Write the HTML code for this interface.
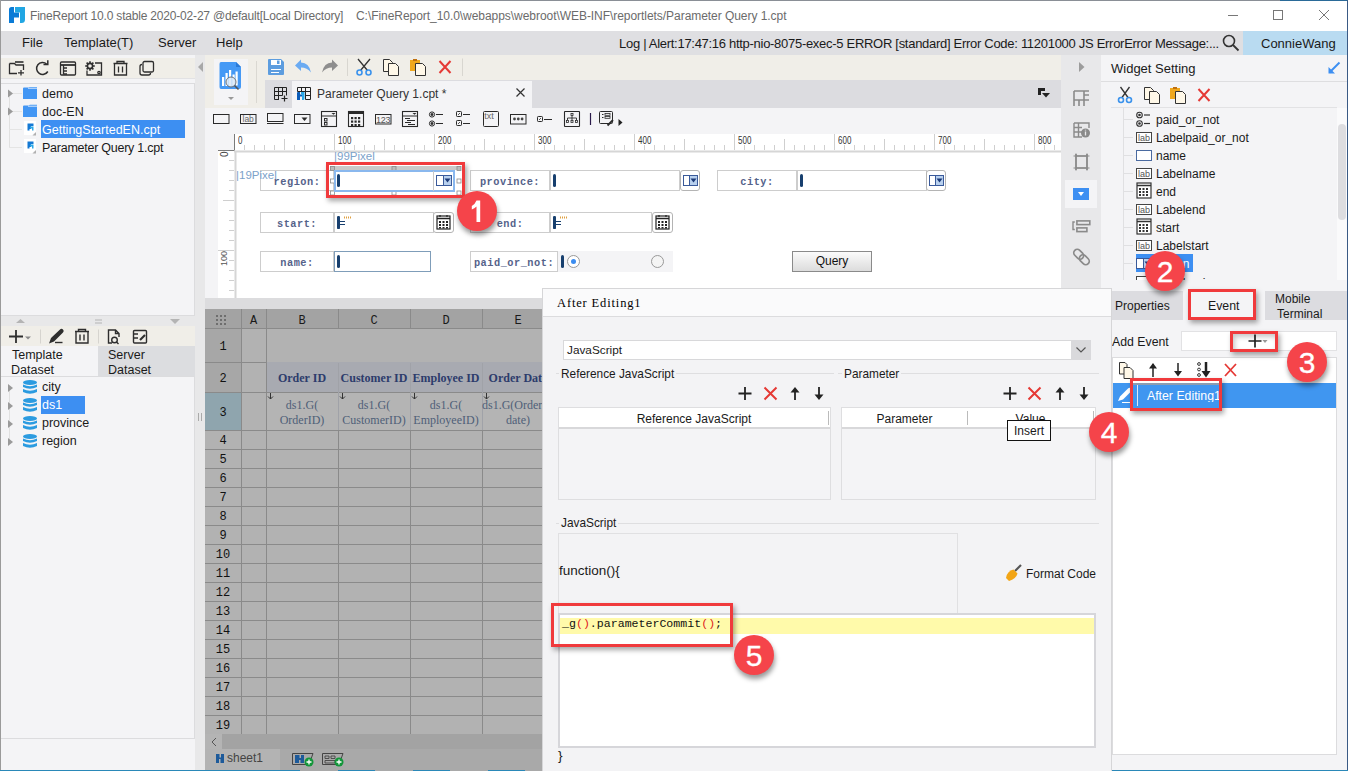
<!DOCTYPE html>
<html><head><meta charset="utf-8">
<style>
*{margin:0;padding:0;box-sizing:border-box}
html,body{width:1348px;height:771px;overflow:hidden;background:#f4f4f6;font-family:"Liberation Sans",sans-serif;color:#1a1a1a}
.a{position:absolute}
.t{position:absolute;white-space:nowrap;line-height:1}
</style></head><body>
<div class="a" style="left:0;top:0;width:1348px;height:771px;overflow:hidden">

<!-- window border -->
<div class="a" style="left:0;top:0;width:1280px;height:1px;background:#8a8f96"></div><div class="a" style="left:1280px;top:0;width:68px;height:1px;background:#2a6a98"></div>
<div class="a" style="left:0;top:0;width:1px;height:771px;background:#9a9a9a"></div>
<div class="a" style="left:1347px;top:0;width:1px;height:771px;background:#3a5a85"></div><div class="a" style="left:1346px;top:55px;width:1px;height:715px;background:#e4e4e6"></div>
<div class="a" style="left:0;top:770px;width:1348px;height:1px;background:#2a88b8"></div><div class="a" style="left:300px;top:770px;width:242px;height:1px;background:repeating-linear-gradient(90deg,#a9a9a9 0 38px,#2a88b8 38px 75px)"></div>

<!-- title bar -->
<div class="a" style="left:1px;top:1px;width:1346px;height:30px;background:#fff"></div>

<!-- menu bar -->
<div class="a" style="left:1px;top:31px;width:1346px;height:24px;background:#dfdfe2"></div>
<div class="a" style="left:1243px;top:31px;width:104px;height:24px;background:#b9dbf1"></div>


<!-- TITLE -->
<svg class="a" style="left:9px;top:7px" width="16" height="16" viewBox="0 0 16 16"><path d="M0,2.5Q0,0 2.5,0H5V5.4H10V10.4H5V16H0Z" fill="#0a7bd6"/><path d="M6,0H16V12.5Q16,16 12.5,16H11V5.4H6Z" fill="#21a6e3"/></svg>
<div class="t" style="left:30px;top:10px;font-size:12px;color:#6b6b6b;letter-spacing:-0.19px">FineReport 10.0 stable 2020-02-27 @default[Local Directory]</div>
<div class="t" style="left:356px;top:10px;font-size:12px;color:#6b6b6b;letter-spacing:-0.05px">C:\FineReport_10.0\webapps\webroot\WEB-INF\reportlets/Parameter Query 1.cpt</div>
<div class="a" style="left:1228px;top:15px;width:10px;height:1px;background:#777"></div>
<div class="a" style="left:1273px;top:10px;width:10px;height:10px;border:1px solid #777"></div>
<svg class="a" style="left:1319px;top:10px" width="10" height="10" viewBox="0 0 10 10"><path d="M0,0L10,10M10,0L0,10" stroke="#777" stroke-width="1"/></svg>

<!-- MENU -->
<div class="t" style="left:22px;top:36px;font-size:13px">File</div>
<div class="t" style="left:64px;top:36px;font-size:13px">Template(T)</div>
<div class="t" style="left:158px;top:36px;font-size:13px">Server</div>
<div class="t" style="left:216px;top:36px;font-size:13px">Help</div>
<div class="t" style="left:619px;top:37px;font-size:13px;letter-spacing:-0.29px">Log | Alert:17:47:16 http-nio-8075-exec-5 ERROR [standard] Error Code: 11201000 JS ErrorError Message:...</div>
<svg class="a" style="left:1222px;top:34px" width="18" height="18" viewBox="0 0 18 18"><circle cx="7" cy="7" r="5.5" fill="none" stroke="#333" stroke-width="1.6"/><path d="M11,11L16.5,16.5" stroke="#333" stroke-width="1.8"/></svg>
<div class="t" style="left:1261px;top:37px;font-size:13px">ConnieWang</div>

<!-- left panel -->
<div class="a" style="left:1px;top:55px;width:194px;height:715px;background:#f4f4f6"></div>
<div class="a" style="left:1px;top:58px;width:194px;height:20px;background:#f0eee8"></div>
<div class="a" style="left:1px;top:78px;width:194px;height:1px;background:#e2e2e4"></div>
<svg class="a" style="left:8px;top:60px" width="150" height="17" viewBox="0 0 150 17" fill="none" stroke="#2e2e2e" stroke-width="1.3">
 <path d="M1.5,3.5H6.5L8,5H15.5V10M9,13.5H1.5V3.5"/><path d="M7,2H15.5" stroke-width="1.6"/><path d="M13,10V15.5M10,12.8H16"/>
 <path d="M38.6,4A6,6 0 1 0 39.8,11.5" stroke-width="1.5"/><path d="M35.5,4.5H39.8V0.2" stroke-width="1.5"/>
 <rect x="52.5" y="2" width="15" height="13" rx="1"/><path d="M52.5,5H67.5" stroke-width="1.8"/><path d="M55.5,5V14.5M55.5,8H59M55.5,11H59M55.5,14H59"/>
 <circle cx="82" cy="6" r="2.6" stroke-width="1.6"/><path d="M82,1.2V3M82,9V10.8M77.2,6H79M85,6H86.8M78.6,2.6L79.9,3.9M84.1,8.1L85.4,9.4M85.4,2.6L84.1,3.9M79.9,8.1L78.6,9.4" stroke-width="1.6"/><path d="M87,3H93.5V15H79V10.5"/><circle cx="91" cy="12.5" r="1.2"/>
 <path d="M105.5,3.5H119.5M109,3.5V1.5H116V3.5M106.5,3.5V15H118.5V3.5M110.5,6.5V12.5M114.5,6.5V12.5"/>
 <rect x="135" y="1.5" width="10.5" height="10.5" rx="1.5"/><path d="M134,4.5A2,2 0 0 0 132,6.5V13A2,2 0 0 0 134,15H140.5A2,2 0 0 0 142.5,13"/>
</svg>
<!-- tree box -->
<div class="a" style="left:1px;top:83px;width:194px;height:233px;border:1px solid #dcdcde;border-left:none;background:#f4f4f6"></div>
<div class="a" style="left:9px;top:96px;width:1px;height:52px;background:#e0e0e0"></div>
<div class="a" style="left:12px;top:93px;width:10px;height:1px;background:#e4e4e4"></div>
<div class="a" style="left:12px;top:111px;width:10px;height:1px;background:#e4e4e4"></div>
<div class="a" style="left:9px;top:129px;width:13px;height:1px;background:#e4e4e4"></div>
<div class="a" style="left:9px;top:147px;width:13px;height:1px;background:#e4e4e4"></div>
<svg class="a" style="left:7px;top:87px" width="32" height="70" viewBox="0 0 32 70">
 <path d="M1,2.5L6,6.5L1,10.5Z" fill="#9a9a9a"/><path d="M1,20.5L6,24.5L1,28.5Z" fill="#9a9a9a"/>
 <path d="M16,1.5Q16,0.5 17,0.5H21.5L23,-0.2H30V12H16Z" fill="#4296f4"/><path d="M21,1.2H30" stroke="#fff" stroke-width="0.8"/>
 <path d="M16,19.5Q16,18.5 17,18.5H21.5L23,17.8H30V30H16Z" fill="#4296f4"/><path d="M21,19.2H30" stroke="#fff" stroke-width="0.8"/>
 <path d="M17,34H29V46H27L25,48H17Z" fill="#fff"/><path d="M29,45L25.5,48.5H29Z" fill="#b0b0b0"/>
 <path d="M20.5,36.5H26.5V39H24V42H22.5V43.5H20.5Z" fill="#1479d4"/><path d="M23,39.5H26.5V43.5H25V41.5H23Z" fill="#2aa8e8"/>
 <path d="M17,52H29V64H27L25,66H17Z" fill="#fff"/><path d="M29,63L25.5,66.5H29Z" fill="#b0b0b0"/>
 <path d="M20.5,54.5H26.5V57H24V60H22.5V61.5H20.5Z" fill="#1479d4"/><path d="M23,57.5H26.5V61.5H25V59.5H23Z" fill="#2aa8e8"/>
</svg>
<div class="t" style="left:42px;top:88px;font-size:12.5px">demo</div>
<div class="t" style="left:42px;top:106px;font-size:12.5px">doc-EN</div>
<div class="a" style="left:41px;top:120px;width:144px;height:18px;background:#3d8ff2"></div>
<div class="t" style="left:42px;top:124px;font-size:12.5px;color:#fff">GettingStartedEN.cpt</div>
<div class="t" style="left:42px;top:142px;font-size:12.5px;letter-spacing:-0.25px">Parameter Query 1.cpt</div>

<!-- datasets splitter -->
<div class="a" style="left:1px;top:316px;width:194px;height:10px;background:#e8e8e9"></div>
<svg class="a" style="left:15px;top:318px" width="170" height="8" viewBox="0 0 170 8"><path d="M1,5L5.5,1L10,5Z" fill="#b4b4b4"/><path d="M80,2H87M80,5H87" stroke="#b4b4b4" stroke-width="1"/><path d="M155,1H165L160,6Z" fill="#b4b4b4"/></svg>
<div class="a" style="left:1px;top:326px;width:194px;height:20px;background:#f0eee8"></div>
<svg class="a" style="left:8px;top:328px" width="145" height="17" viewBox="0 0 145 17" fill="none" stroke="#2e2e2e" stroke-width="1.4">
 <path d="M8,2V15M1,8.5H15" stroke-width="1.8"/><path d="M17,8.5H23L20,11.5Z" fill="#8a8a8a" stroke="none"/>
 <path d="M32.5,1.5V15.5" stroke="#d6d4cf" stroke-width="1"/>
 <path d="M41,15.5L43,10L52,1.5A1.5,1.5 0 0 1 55,4.5L46,13.5Z" fill="#2e2e2e" stroke="none"/><path d="M47,14.5H54.5"/>
 <path d="M67,3.5H81M70.5,3.5V1.5H77.5V3.5M68,3.5V15H80V3.5M72,6.5V12.5M76,6.5V12.5"/>
 <path d="M90.5,1.5V15.5" stroke="#d6d4cf" stroke-width="1"/>
 <path d="M104,15H100.5V2H107.5L111,5.5V9M107.5,2V5.5H111"/><circle cx="106.5" cy="12" r="2.8"/><path d="M108.5,14L110.5,16"/>
 <rect x="125.5" y="2.5" width="13" height="12.5" rx="1"/><path d="M125.5,6H130M125.5,10H130" /><path d="M132,12L137,7" stroke-width="2.2"/>
</svg>
<!-- dataset tabs -->
<div class="a" style="left:98px;top:346px;width:97px;height:31px;background:#dcdde0"></div>
<div class="t" style="left:12px;top:349px;font-size:12.5px">Template</div>
<div class="t" style="left:11px;top:364px;font-size:12.5px">Dataset</div>
<div class="t" style="left:108px;top:349px;font-size:12.5px">Server</div>
<div class="t" style="left:108px;top:364px;font-size:12.5px">Dataset</div>
<div class="a" style="left:1px;top:376px;width:194px;height:363px;border:1px solid #dcdcde;border-left:none;background:#f4f4f6"></div>
<div class="a" style="left:9px;top:390px;width:1px;height:52px;background:#e0e0e0"></div>
<svg class="a" style="left:7px;top:379px" width="32" height="72" viewBox="0 0 32 72">
 <g fill="#9a9a9a"><path d="M1,5L6,9L1,13Z"/><path d="M1,23L6,27L1,31Z"/><path d="M1,41L6,45L1,49Z"/><path d="M1,59L6,63L1,67Z"/></g>
 <g fill="#2b9be0">
 <ellipse cx="23" cy="3.5" rx="7" ry="2.5"/><path d="M16,5.5Q23,9 30,5.5V8Q23,11.5 16,8Z"/><path d="M16,10Q23,13.5 30,10V13Q23,16.5 16,13Z"/>
 <ellipse cx="23" cy="21.5" rx="7" ry="2.5"/><path d="M16,23.5Q23,27 30,23.5V26Q23,29.5 16,26Z"/><path d="M16,28Q23,31.5 30,28V31Q23,34.5 16,31Z"/>
 <ellipse cx="23" cy="39.5" rx="7" ry="2.5"/><path d="M16,41.5Q23,45 30,41.5V44Q23,47.5 16,44Z"/><path d="M16,46Q23,49.5 30,46V49Q23,52.5 16,49Z"/>
 <ellipse cx="23" cy="57.5" rx="7" ry="2.5"/><path d="M16,59.5Q23,63 30,59.5V62Q23,65.5 16,62Z"/><path d="M16,64Q23,67.5 30,64V67Q23,70.5 16,67Z"/>
 </g>
</svg>
<div class="t" style="left:42px;top:381px;font-size:12.5px">city</div>
<div class="a" style="left:41px;top:396px;width:44px;height:18px;background:#3d8ff2"></div>
<div class="t" style="left:42px;top:399px;font-size:12.5px;color:#fff">ds1</div>
<div class="t" style="left:42px;top:417px;font-size:12.5px">province</div>
<div class="t" style="left:42px;top:435px;font-size:12.5px">region</div>

<!-- splitter -->
<div class="a" style="left:195px;top:55px;width:10px;height:715px;background:#e8e8e9"></div>

<!-- center -->
<div class="a" style="left:205px;top:55px;width:856px;height:25px;background:#f0eee8"></div>
<div class="a" style="left:205px;top:80px;width:856px;height:28px;background:#dcdce0"></div>
<div class="a" style="left:205px;top:80px;width:60px;height:28px;background:#f0eee8"></div>
<div class="a" style="left:214px;top:59px;width:34px;height:46px;background:#f4f4f6"></div>
<svg class="a" style="left:219px;top:61px" width="24" height="40" viewBox="0 0 24 40">
 <path d="M2,1H17L22,6V26Q22,28 20,28H2Q0.5,28 0.5,26V3Q0.5,1 2,1Z" fill="#4599f5"/><path d="M17,1L22,6H17Z" fill="#2a7ad8"/>
 <g fill="#fff"><rect x="3" y="16" width="2.2" height="9"/><rect x="6.5" y="12" width="2.2" height="13"/><rect x="10" y="9" width="2.2" height="16"/><rect x="13.5" y="13.5" width="2.2" height="11"/><rect x="16.5" y="10.5" width="2.2" height="14"/></g>
 <circle cx="12" cy="21" r="5" fill="#dbe9f8" fill-opacity="0.85" stroke="#666" stroke-width="0.9"/><path d="M15.5,24.5L19.5,28.5" stroke="#555" stroke-width="1.6"/>
 <path d="M9,36H15L12,39Z" fill="#999"/>
</svg>
<div class="a" style="left:256px;top:61px;width:1px;height:42px;background:#dad8d2"></div>
<svg class="a" style="left:0;top:0" width="470" height="80" viewBox="0 0 470 80">
 <path d="M268,60Q268,59 269,59H281L284,62V74Q284,75 283,75H269Q268,75 268,74Z" fill="#5d9ddf"/><rect x="271" y="60" width="10" height="5" fill="#fff"/><rect x="277" y="60.5" width="2.5" height="3.5" fill="#5d9ddf"/><path d="M271,69.5H281M271,72.5H279" stroke="#fff" stroke-width="1"/>
 <path d="M295,65.5L301,59.5V62.5Q309,62.5 311,72.5Q307,67.5 301,67.5V71Z" fill="#6babf2"/>
 <path d="M338,65.5L332,59.5V62.5Q324,62.5 322,72.5Q326,67.5 332,67.5V71Z" fill="#8e8e8e"/>
 <path d="M347.5,58.5V76" stroke="#d8d6d0" stroke-width="1"/>
 <path d="M358,59L367.5,70.5M370,59L360.5,70.5" stroke="#333" stroke-width="1.3"/><circle cx="359.5" cy="72.5" r="2.5" fill="none" stroke="#3a92ec" stroke-width="1.6"/><circle cx="368.5" cy="72.5" r="2.5" fill="none" stroke="#3a92ec" stroke-width="1.6"/>
 <path d="M383.5,59.5H389.5L392.5,62.5V71.5H383.5Z" fill="#fff8e8" stroke="#333" stroke-width="1"/><path d="M388.5,63.5H395.5L398.5,66.5V75.5H388.5Z" fill="#fff8e8" stroke="#333" stroke-width="1"/>
 <rect x="410" y="60" width="10" height="11" fill="#f0a81c"/><rect x="413" y="59" width="4" height="2" fill="#c07010"/><path d="M415.5,63.5H422.5L425.5,66.5V75.5H415.5Z" fill="#fff8e8" stroke="#333" stroke-width="1"/>
 <path d="M439.5,61L450.5,73M450.5,61L439.5,73" stroke="#e53935" stroke-width="2"/>
 <path d="M462.5,58.5V76" stroke="#d8d6d0" stroke-width="1"/>
</svg>
<!-- tabs -->
<svg class="a" style="left:0;top:0" width="320" height="110" viewBox="0 0 320 110" fill="none" stroke="#222" stroke-width="1"><path d="M274.5,99.5V87.5H286.5V95.5M278.5,87.5V99.5M282.5,87.5V95.5M274.5,91.5H286.5M274.5,95.5H282.5M274.5,99.5H279"/><path d="M284.5,95.5V101.5M281.5,98.5H287.5" stroke-width="1.2"/></svg>
<div class="a" style="left:292px;top:81px;width:240px;height:27px;background:#f4f4f6"></div>
<svg class="a" style="left:0;top:0" width="320" height="110" viewBox="0 0 320 110"><path d="M297.5,91.5V87.5H310.5V99.5H305.5V87.5M297.5,91.5H310.5M305.5,95.5H310.5M301.5,87.5V91.5" fill="none" stroke="#222" stroke-width="1"/><path d="M297,93Q297,92 298,92H300V94.5H302V96.5H300V100H297Z" fill="#0b5cb8"/><path d="M301,92H304.5V98.5Q304.5,100 303,100H302V94.5H301Z" fill="#2aa8e8"/></svg>
<div class="t" style="left:317px;top:88px;font-size:12px;color:#333">Parameter Query 1.cpt *</div>
<svg class="a" style="left:516px;top:88px" width="9" height="9" viewBox="0 0 9 9"><path d="M0.5,0.5L8.5,8.5M8.5,0.5L0.5,8.5" stroke="#333" stroke-width="1.2"/></svg>
<svg class="a" style="left:1038px;top:88px" width="12" height="11" viewBox="0 0 12 11"><path d="M0,0H7V3H3V7H0Z" fill="#222"/><path d="M4,5H12L8,9.5Z" fill="#222"/></svg>
<!-- widget toolbar -->
<div class="a" style="left:205px;top:108px;width:856px;height:26px;background:#f4f4f6"></div>
<svg class="a" style="left:205px;top:108px" width="420" height="26" viewBox="0 0 420 26" fill="none" stroke="#2a2a2a" stroke-width="1">
 <rect x="8.5" y="6.5" width="15.5" height="9"/>
 <rect x="35.5" y="6.5" width="15.5" height="9"/><text x="37.5" y="14.2" font-size="8.5" fill="#666" stroke="none" font-family="Liberation Sans">lab</text>
 <rect x="62.5" y="5.5" width="15.5" height="8"/><path d="M62,15.5H78.5" />
 <rect x="89.5" y="6.5" width="15.5" height="9"/><path d="M96.5,9.5H102.5L99.5,13Z" fill="#2a2a2a" stroke="none"/>
 <rect x="116.5" y="3.5" width="15" height="15" stroke-width="1.1"/><path d="M116.5,8H131.5"/><path d="M126.5,5H130.5L128.5,6.8Z" fill="#2a2a2a" stroke="none"/><rect x="119.5" y="10.5" width="2.5" height="2.5"/><rect x="119.5" y="14.5" width="2.5" height="2.5"/>
 <rect x="143.5" y="3.5" width="15" height="15" stroke-width="1.1"/><path d="M143.5,5H158.5" stroke-width="2"/><g fill="#2a2a2a" stroke="none"><rect x="146.0" y="9.0" width="2.2" height="2.2"/><rect x="146.0" y="12.5" width="2.2" height="2.2"/><rect x="146.0" y="16.0" width="2.2" height="2.2"/><rect x="149.5" y="9.0" width="2.2" height="2.2"/><rect x="149.5" y="12.5" width="2.2" height="2.2"/><rect x="149.5" y="16.0" width="2.2" height="2.2"/><rect x="153.0" y="9.0" width="2.2" height="2.2"/><rect x="153.0" y="12.5" width="2.2" height="2.2"/><rect x="153.0" y="16.0" width="2.2" height="2.2"/></g>
 <rect x="170.5" y="6.5" width="15.5" height="9.5"/><text x="171" y="14.8" font-size="9" fill="#555" stroke="none" font-family="Liberation Sans" letter-spacing="-0.2">123</text>
 <rect x="197.5" y="3.5" width="15" height="15" stroke-width="1.1"/><path d="M197.5,8H212.5M200,10.5H205M202,12.5H210M200,14.5H206M203,16.5H210"/><path d="M207.5,5H211.5L209.5,6.8Z" fill="#2a2a2a" stroke="none"/>
 <circle cx="227" cy="6.5" r="2.6"/><circle cx="227" cy="6.5" r="1" fill="#2a2a2a"/><path d="M231,6.5H238"/><circle cx="227" cy="15.5" r="2.6"/><circle cx="227" cy="15.5" r="1" fill="#2a2a2a"/><path d="M231,15.5H238"/>
 <rect x="251.5" y="3.5" width="5" height="5" rx="0.8"/><path d="M253,7L255,5" stroke-width="0.8"/><path d="M258,6.5H265"/><rect x="251.5" y="12.5" width="5" height="5" rx="0.8"/><path d="M253,16L255,14" stroke-width="0.8"/><path d="M258,15.5H265"/>
 <rect x="278.5" y="3.5" width="15" height="15" rx="1"/><text x="279.3" y="11" font-size="9" fill="#666" stroke="none" font-family="Liberation Sans">txt</text>
 <rect x="305.5" y="6.5" width="15.5" height="9.5"/><g fill="#444" stroke="none"><circle cx="309.5" cy="11" r="1.4"/><circle cx="313.3" cy="11" r="1.4"/><circle cx="317.1" cy="11" r="1.4"/></g>
 <rect x="332.5" y="8.5" width="5" height="5" rx="0.8"/><path d="M334,12L336,10" stroke-width="0.8"/><path d="M339,11.5H347"/>
 <rect x="359.5" y="3.5" width="15" height="15" rx="0.5" stroke-width="1.1"/><rect x="366" y="5.5" width="2" height="2" stroke-width="0.8"/><path d="M367,7.5V10M362.5,12V10H371.5V12M367,10V12" stroke-width="0.9"/><rect x="361.5" y="12.5" width="2" height="2" stroke-width="0.8"/><rect x="366" y="12.5" width="2" height="2" stroke-width="0.8"/><rect x="370.5" y="12.5" width="2" height="2" stroke-width="0.8"/>
 <path d="M385.5,5V17" stroke="#2a1a4a" stroke-width="1.2"/>
 <rect x="394.5" y="3.5" width="13" height="12" rx="1"/><path d="M397,6.5H398.5M397,9.5H398.5" stroke-width="1.2"/><rect x="400" y="5.5" width="5" height="1.8" stroke-width="0.8"/><rect x="400" y="8.5" width="5" height="1.8" stroke-width="0.8"/><path d="M402.5,17.5L408,12" stroke-width="1.8"/>
 <path d="M413.5,11L417.5,14.5L413.5,18Z" fill="#222" stroke="none"/>
</svg>
<!-- ruler -->
<div class="a" style="left:205px;top:134px;width:856px;height:164px;background:#f4f4f6"></div>
<div class="a" style="left:234px;top:134px;width:827px;height:164px;background:#fff"></div><div class="a" style="left:218px;top:151px;width:17px;height:147px;background:#fff"></div>
<svg class="a" style="left:0;top:0" width="1061" height="300" viewBox="0 0 1061 300"><path d="M234.5,134V150 M244.5,145V150 M254.5,145V150 M264.5,145V150 M274.5,145V150 M284.5,139V150 M294.5,145V150 M304.5,145V150 M314.5,145V150 M324.5,145V150 M334.5,134V150 M344.5,145V150 M354.5,145V150 M364.5,145V150 M374.5,145V150 M384.5,139V150 M394.5,145V150 M404.5,145V150 M414.5,145V150 M424.5,145V150 M434.5,134V150 M444.5,145V150 M454.5,145V150 M464.5,145V150 M474.5,145V150 M484.5,139V150 M494.5,145V150 M504.5,145V150 M514.5,145V150 M524.5,145V150 M534.5,134V150 M544.5,145V150 M554.5,145V150 M564.5,145V150 M574.5,145V150 M584.5,139V150 M594.5,145V150 M604.5,145V150 M614.5,145V150 M624.5,145V150 M634.5,134V150 M644.5,145V150 M654.5,145V150 M664.5,145V150 M674.5,145V150 M684.5,139V150 M694.5,145V150 M704.5,145V150 M714.5,145V150 M724.5,145V150 M734.5,134V150 M744.5,145V150 M754.5,145V150 M764.5,145V150 M774.5,145V150 M784.5,139V150 M794.5,145V150 M804.5,145V150 M814.5,145V150 M824.5,145V150 M834.5,134V150 M844.5,145V150 M854.5,145V150 M864.5,145V150 M874.5,145V150 M884.5,139V150 M894.5,145V150 M904.5,145V150 M914.5,145V150 M924.5,145V150 M934.5,134V150 M944.5,145V150 M954.5,145V150 M964.5,145V150 M974.5,145V150 M984.5,139V150 M994.5,145V150 M1004.5,145V150 M1014.5,145V150 M1024.5,145V150 M1034.5,134V150 M1044.5,145V150 M1054.5,145V150" stroke="#cfcfcf" stroke-width="1"/><path d="M229,160.5H234 M229,170.5H234 M229,180.5H234 M229,190.5H234 M223,200.5H234 M229,210.5H234 M229,220.5H234 M229,230.5H234 M229,240.5H234 M218,250.5H234 M229,260.5H234 M229,270.5H234 M229,280.5H234 M229,290.5H234" stroke="#cfcfcf" stroke-width="1"/><path d="M234.5,134V150.5H218" fill="none" stroke="#7a7a7a" stroke-width="1"/><path d="M234,151.5H1061M235.5,151V298" stroke="#d6d6d6" stroke-width="2"/></svg>
<div class="t" style="left:238px;top:136px;font-size:10px;color:#333;transform:scaleX(0.8);transform-origin:0 0">0</div><div class="t" style="left:338px;top:136px;font-size:10px;color:#333;transform:scaleX(0.8);transform-origin:0 0">100</div><div class="t" style="left:438px;top:136px;font-size:10px;color:#333;transform:scaleX(0.8);transform-origin:0 0">200</div><div class="t" style="left:538px;top:136px;font-size:10px;color:#333;transform:scaleX(0.8);transform-origin:0 0">300</div><div class="t" style="left:638px;top:136px;font-size:10px;color:#333;transform:scaleX(0.8);transform-origin:0 0">400</div><div class="t" style="left:738px;top:136px;font-size:10px;color:#333;transform:scaleX(0.8);transform-origin:0 0">500</div><div class="t" style="left:838px;top:136px;font-size:10px;color:#333;transform:scaleX(0.8);transform-origin:0 0">600</div><div class="t" style="left:938px;top:136px;font-size:10px;color:#333;transform:scaleX(0.8);transform-origin:0 0">700</div><div class="t" style="left:1038px;top:136px;font-size:10px;color:#333;transform:scaleX(0.8);transform-origin:0 0">800</div>
<div class="t" style="left:219px;top:157px;font-size:10px;color:#444;transform:rotate(-90deg) scaleY(1.15);transform-origin:0 0">0</div>
<div class="t" style="left:220px;top:266px;font-size:9px;color:#555;transform:rotate(-90deg);transform-origin:0 0">100</div>
<!-- params -->
<div class="a" style="left:260px;top:170px;width:74px;height:21px;border:1px solid #cdcdcd;background:#fff"></div><div class="t" style="left:260px;top:176px;width:74px;text-align:center;font:bold 10.3px 'Liberation Mono',monospace;color:#55628a;letter-spacing:0.5px">region:</div>
<div class="a" style="left:334px;top:170px;width:100px;height:21px;border:1px solid #cdcdcd;background:#fff"></div><div class="a" style="left:337px;top:174px;width:3px;height:13px;border-radius:1.5px;background:#173f6e"></div>
<div class="a" style="left:470px;top:170px;width:80px;height:21px;border:1px solid #cdcdcd;background:#fff"></div><div class="t" style="left:470px;top:176px;width:80px;text-align:center;font:bold 10.3px 'Liberation Mono',monospace;color:#55628a;letter-spacing:0.5px">province:</div>
<div class="a" style="left:550px;top:170px;width:130px;height:21px;border:1px solid #cdcdcd;background:#fff"></div><div class="a" style="left:553px;top:174px;width:3px;height:13px;border-radius:1.5px;background:#173f6e"></div>
<div class="a" style="left:680px;top:170px;width:20px;height:21px;border:1px solid #b4b4b4;border-radius:3px;background:#fff"></div><svg class="a" style="left:683px;top:175px" width="15" height="11" viewBox="0 0 15 11"><rect x="0.5" y="0.5" width="6" height="10" fill="#fff" stroke="#3a5a9a"/><rect x="6.5" y="0.5" width="8" height="10" fill="#b8d0ee" stroke="#3a5a9a"/><path d="M7.5,3.5H13.5L10.5,7.5Z" fill="#1c3a78"/></svg>
<div class="a" style="left:717px;top:170px;width:80px;height:21px;border:1px solid #cdcdcd;background:#fff"></div><div class="t" style="left:717px;top:176px;width:80px;text-align:center;font:bold 10.3px 'Liberation Mono',monospace;color:#55628a;letter-spacing:0.5px">city:</div>
<div class="a" style="left:797px;top:170px;width:130px;height:21px;border:1px solid #cdcdcd;background:#fff"></div><div class="a" style="left:800px;top:174px;width:3px;height:13px;border-radius:1.5px;background:#173f6e"></div>
<div class="a" style="left:926px;top:170px;width:20px;height:21px;border:1px solid #b4b4b4;border-radius:3px;background:#fff"></div><svg class="a" style="left:929px;top:175px" width="15" height="11" viewBox="0 0 15 11"><rect x="0.5" y="0.5" width="6" height="10" fill="#fff" stroke="#3a5a9a"/><rect x="6.5" y="0.5" width="8" height="10" fill="#b8d0ee" stroke="#3a5a9a"/><path d="M7.5,3.5H13.5L10.5,7.5Z" fill="#1c3a78"/></svg>
<div class="a" style="left:260px;top:212px;width:74px;height:21px;border:1px solid #cdcdcd;background:#fff"></div><div class="t" style="left:260px;top:218px;width:74px;text-align:center;font:bold 10.3px 'Liberation Mono',monospace;color:#55628a;letter-spacing:0.5px">start:</div>
<div class="a" style="left:334px;top:212px;width:100px;height:21px;border:1px solid #cdcdcd;background:#fff"></div><div class="a" style="left:337px;top:216px;width:3px;height:13px;border-radius:1.5px;background:#173f6e"></div>
<svg class="a" style="left:337px;top:216px" width="20" height="14" viewBox="0 0 20 14"><rect x="0" y="0" width="3" height="13" rx="1.5" fill="#173f6e"/><path d="M3,5.5H8M3,8.5H8" stroke="#173f6e" stroke-width="1"/><path d="M7,1.5H14" stroke="#e0a040" stroke-width="2" stroke-dasharray="1 1"/></svg>
<div class="a" style="left:433px;top:212px;width:21px;height:21px;border:1px solid #b4b4b4;border-radius:3px;background:#fff"></div><svg class="a" style="left:436px;top:214px" width="15" height="16" viewBox="0 0 15 16"><rect x="1" y="2" width="13" height="13" fill="none" stroke="#222" stroke-width="1.2"/><path d="M1,4.5H14" stroke="#222" stroke-width="1.5"/><path d="M4,1V3M11,1V3" stroke="#222" stroke-width="1.2"/><g fill="#222"><rect x="3" y="7" width="2" height="2"/><rect x="6.5" y="7" width="2" height="2"/><rect x="10" y="7" width="2" height="2"/><rect x="3" y="10" width="2" height="2"/><rect x="6.5" y="10" width="2" height="2"/><rect x="10" y="10" width="2" height="2"/><rect x="3" y="13" width="2" height="1.5"/><rect x="6.5" y="13" width="2" height="1.5"/><rect x="10" y="13" width="2" height="1.5"/></g></svg>
<div class="a" style="left:470px;top:212px;width:80px;height:21px;border:1px solid #cdcdcd;background:#fff"></div><div class="t" style="left:470px;top:218px;width:80px;text-align:center;font:bold 10.3px 'Liberation Mono',monospace;color:#55628a;letter-spacing:0.5px">end:</div>
<div class="a" style="left:550px;top:212px;width:102px;height:21px;border:1px solid #cdcdcd;background:#fff"></div><div class="a" style="left:553px;top:216px;width:3px;height:13px;border-radius:1.5px;background:#173f6e"></div>
<svg class="a" style="left:553px;top:216px" width="20" height="14" viewBox="0 0 20 14"><rect x="0" y="0" width="3" height="13" rx="1.5" fill="#173f6e"/><path d="M3,5.5H8M3,8.5H8" stroke="#173f6e" stroke-width="1"/><path d="M7,1.5H14" stroke="#e0a040" stroke-width="2" stroke-dasharray="1 1"/></svg>
<div class="a" style="left:652px;top:212px;width:21px;height:21px;border:1px solid #b4b4b4;border-radius:3px;background:#fff"></div><svg class="a" style="left:655px;top:214px" width="15" height="16" viewBox="0 0 15 16"><rect x="1" y="2" width="13" height="13" fill="none" stroke="#222" stroke-width="1.2"/><path d="M1,4.5H14" stroke="#222" stroke-width="1.5"/><path d="M4,1V3M11,1V3" stroke="#222" stroke-width="1.2"/><g fill="#222"><rect x="3" y="7" width="2" height="2"/><rect x="6.5" y="7" width="2" height="2"/><rect x="10" y="7" width="2" height="2"/><rect x="3" y="10" width="2" height="2"/><rect x="6.5" y="10" width="2" height="2"/><rect x="10" y="10" width="2" height="2"/><rect x="3" y="13" width="2" height="1.5"/><rect x="6.5" y="13" width="2" height="1.5"/><rect x="10" y="13" width="2" height="1.5"/></g></svg>
<div class="a" style="left:260px;top:251px;width:74px;height:21px;border:1px solid #cdcdcd;background:#fff"></div><div class="t" style="left:260px;top:257px;width:74px;text-align:center;font:bold 10.3px 'Liberation Mono',monospace;color:#55628a;letter-spacing:0.5px">name:</div>
<div class="a" style="left:334px;top:251px;width:97px;height:21px;border:1px solid #7f9db9;background:#fff"></div><div class="a" style="left:337px;top:255px;width:3px;height:13px;border-radius:1.5px;background:#173f6e"></div>
<div class="a" style="left:470px;top:251px;width:88px;height:21px;border:1px solid #cdcdcd;background:#fff"></div><div class="t" style="left:470px;top:257px;width:88px;text-align:center;font:bold 10.3px 'Liberation Mono',monospace;color:#55628a;letter-spacing:0.5px">paid_or_not:</div>
<div class="a" style="left:558px;top:251px;width:115px;height:21px;background:#f4f4f6"></div>
<div class="a" style="left:561px;top:255px;width:3px;height:13px;border-radius:1.5px;background:#173f6e"></div>
<svg class="a" style="left:565px;top:253px" width="100" height="17" viewBox="0 0 100 17"><circle cx="8.5" cy="8.5" r="6" fill="#fff" stroke="#999" stroke-width="1"/><circle cx="8.5" cy="8.5" r="2.5" fill="#3b8cf0"/><circle cx="92.5" cy="8.5" r="6" fill="#f4f4f4" stroke="#999" stroke-width="1"/></svg>
<div class="a" style="left:792px;top:251px;width:80px;height:21px;border:1px solid #8a8a8a;background:linear-gradient(#fbfbfb,#dcdcdc)"></div>
<div class="t" style="left:792px;top:255px;width:80px;text-align:center;font-size:12px;color:#111">Query</div>
<div class="t" style="left:334px;top:151px;font-size:11.5px;color:#7ca2ca">|99Pixel</div>
<div class="t" style="left:236px;top:170px;font-size:11.5px;color:#7ca2ca">|19Pixel</div>
<!-- selection / red box -->
<div class="a" style="left:330px;top:166px;width:131px;height:4px;background:#c9c9c9"></div>
<svg class="a" style="left:328px;top:164px" width="136" height="32" viewBox="0 0 136 32" fill="#fff" stroke="#8c8c8c" stroke-width="0.8"><rect x="2.5" y="2.5" width="4" height="4" fill="#bbb"/><rect x="64" y="2.5" width="4" height="4" fill="#bbb"/><rect x="129" y="2.5" width="4" height="4" fill="#bbb"/><rect x="2.5" y="15" width="4" height="4"/><rect x="129" y="15" width="4" height="4"/><rect x="2.5" y="27" width="4" height="4"/><rect x="64" y="27" width="4" height="4"/><rect x="129" y="27" width="4" height="4"/></svg>
<div class="a" style="left:334px;top:170px;width:121px;height:22px;border:2px solid #8ab8ee"></div>
<div class="a" style="left:433px;top:171px;width:20px;height:20px;border-left:1px solid #c8c8c8"></div>
<svg class="a" style="left:436px;top:175px" width="16" height="11" viewBox="0 0 16 11"><rect x="0.5" y="0.5" width="7" height="10" fill="#fff" stroke="#3a5a9a"/><rect x="7.5" y="0.5" width="8" height="10" fill="#b8d0ee" stroke="#3a5a9a"/><path d="M8.5,3.5H14.5L11.5,7.5Z" fill="#1c3a78"/></svg>
<div class="a" style="left:326px;top:162px;width:139px;height:36px;border:3px solid #f03a3c;box-shadow:2px 3px 5px rgba(0,0,0,0.35)"></div>
<div class="a" style="left:457px;top:191px;width:40px;height:40px;border-radius:50%;background:#f5444a;box-shadow:1px 4px 5px rgba(0,0,0,0.4)"></div>
<svg class="a" style="left:0;top:0" width="500" height="240" viewBox="0 0 500 240"><path d="M476.5,200.5H480.2V222H476.5V206.5Q474.5,208.5 471.8,209.6V206Q475,204.3 476.5,200.5Z" fill="#fff"/></svg>

<!-- spreadsheet -->
<div class="a" style="left:205px;top:298px;width:856px;height:11px;background:#dcdcde"></div>
<div class="a" style="left:205px;top:309px;width:337px;height:461px;background:#b2b2b2"></div>
<div class="a" style="left:205px;top:309px;width:337px;height:19px;background:#a3a3a3"></div>
<div class="a" style="left:205px;top:328px;width:36px;height:64px;background:#a7a7a7"></div>
<div class="a" style="left:205px;top:392px;width:36px;height:38px;background:#8fa5ae"></div>
<div class="a" style="left:266px;top:362px;width:276px;height:30px;background:#a8aab1"></div>
<svg class="a" style="left:0;top:0" width="542" height="771" viewBox="0 0 542 771"><path d="M241.5,309V734 M266.5,309V734 M338.5,309V734 M410.5,309V734 M482.5,309V734 M205,328.5H542 M205,362.5H542 M205,392.5H542 M205,430.5H542 M205,449.5H542 M205,468.5H542 M205,487.5H542 M205,506.5H542 M205,525.5H542 M205,544.5H542 M205,563.5H542 M205,582.5H542 M205,601.5H542 M205,620.5H542 M205,639.5H542 M205,658.5H542 M205,677.5H542 M205,696.5H542 M205,715.5H542 M205,734.5H542" stroke="#8a8a8a" stroke-width="1"/></svg>
<div class="a" style="left:267px;top:329px;width:275px;height:33px;background:#b2b2b2"></div>
<div class="a" style="left:267px;top:362px;width:275px;height:30px;background:#a8aab1"></div>
<svg class="a" style="left:0;top:0" width="542" height="771" viewBox="0 0 542 771"><path d="M338.5,363V430M410.5,363V430M482.5,363V430" stroke="#a0a2a8" stroke-width="1"/></svg>
<div class="a" style="left:267px;top:393px;width:71px;height:37px;background:#b4b4b4"></div>
<svg class="a" style="left:267px;top:393px" width="7" height="7" viewBox="0 0 7 7"><path d="M3.5,0V6M1,3.5L3.5,6L6,3.5" fill="none" stroke="#333" stroke-width="1"/></svg>
<div class="a" style="left:339px;top:393px;width:71px;height:37px;background:#b4b4b4"></div>
<svg class="a" style="left:339px;top:393px" width="7" height="7" viewBox="0 0 7 7"><path d="M3.5,0V6M1,3.5L3.5,6L6,3.5" fill="none" stroke="#333" stroke-width="1"/></svg>
<div class="a" style="left:411px;top:393px;width:71px;height:37px;background:#b4b4b4"></div>
<svg class="a" style="left:411px;top:393px" width="7" height="7" viewBox="0 0 7 7"><path d="M3.5,0V6M1,3.5L3.5,6L6,3.5" fill="none" stroke="#333" stroke-width="1"/></svg>
<div class="a" style="left:483px;top:393px;width:59px;height:37px;background:#b4b4b4"></div>
<svg class="a" style="left:483px;top:393px" width="7" height="7" viewBox="0 0 7 7"><path d="M3.5,0V6M1,3.5L3.5,6L6,3.5" fill="none" stroke="#333" stroke-width="1"/></svg>
<div class="t" style="left:241px;top:314px;width:25px;text-align:center;font:12px 'Liberation Mono',monospace;color:#111\">A</div>
<div class="t" style="left:266px;top:314px;width:72px;text-align:center;font:12px 'Liberation Mono',monospace;color:#111\">B</div>
<div class="t" style="left:338px;top:314px;width:72px;text-align:center;font:12px 'Liberation Mono',monospace;color:#111\">C</div>
<div class="t" style="left:410px;top:314px;width:72px;text-align:center;font:12px 'Liberation Mono',monospace;color:#111\">D</div>
<div class="t" style="left:482px;top:314px;width:72px;text-align:center;font:12px 'Liberation Mono',monospace;color:#111\">E</div>
<svg class="a" style="left:216px;top:315px" width="11" height="10" viewBox="0 0 11 10"><g fill="#6e6e6e"><rect x="0" y="0" width="2" height="2"/><rect x="4" y="0" width="2" height="2"/><rect x="8" y="0" width="2" height="2"/><rect x="0" y="4" width="2" height="2"/><rect x="4" y="4" width="2" height="2"/><rect x="8" y="4" width="2" height="2"/><rect x="0" y="8" width="2" height="2"/><rect x="4" y="8" width="2" height="2"/><rect x="8" y="8" width="2" height="2"/></g></svg>
<div class="t" style="left:205px;top:340px;width:36px;text-align:center;font:12px 'Liberation Mono',monospace;color:#111">1</div>
<div class="t" style="left:205px;top:372px;width:36px;text-align:center;font:12px 'Liberation Mono',monospace;color:#111">2</div>
<div class="t" style="left:205px;top:406px;width:36px;text-align:center;font:12px 'Liberation Mono',monospace;color:#111">3</div>
<div class="t" style="left:205px;top:434px;width:36px;text-align:center;font:12px 'Liberation Mono',monospace;color:#111">4</div>
<div class="t" style="left:205px;top:453px;width:36px;text-align:center;font:12px 'Liberation Mono',monospace;color:#111">5</div>
<div class="t" style="left:205px;top:472px;width:36px;text-align:center;font:12px 'Liberation Mono',monospace;color:#111">6</div>
<div class="t" style="left:205px;top:491px;width:36px;text-align:center;font:12px 'Liberation Mono',monospace;color:#111">7</div>
<div class="t" style="left:205px;top:510px;width:36px;text-align:center;font:12px 'Liberation Mono',monospace;color:#111">8</div>
<div class="t" style="left:205px;top:529px;width:36px;text-align:center;font:12px 'Liberation Mono',monospace;color:#111">9</div>
<div class="t" style="left:205px;top:548px;width:36px;text-align:center;font:12px 'Liberation Mono',monospace;color:#111">10</div>
<div class="t" style="left:205px;top:567px;width:36px;text-align:center;font:12px 'Liberation Mono',monospace;color:#111">11</div>
<div class="t" style="left:205px;top:586px;width:36px;text-align:center;font:12px 'Liberation Mono',monospace;color:#111">12</div>
<div class="t" style="left:205px;top:605px;width:36px;text-align:center;font:12px 'Liberation Mono',monospace;color:#111">13</div>
<div class="t" style="left:205px;top:624px;width:36px;text-align:center;font:12px 'Liberation Mono',monospace;color:#111">14</div>
<div class="t" style="left:205px;top:643px;width:36px;text-align:center;font:12px 'Liberation Mono',monospace;color:#111">15</div>
<div class="t" style="left:205px;top:662px;width:36px;text-align:center;font:12px 'Liberation Mono',monospace;color:#111">16</div>
<div class="t" style="left:205px;top:681px;width:36px;text-align:center;font:12px 'Liberation Mono',monospace;color:#111">17</div>
<div class="t" style="left:205px;top:700px;width:36px;text-align:center;font:12px 'Liberation Mono',monospace;color:#111">18</div>
<div class="t" style="left:205px;top:719px;width:36px;text-align:center;font:12px 'Liberation Mono',monospace;color:#111">19</div>
<div class="t" style="left:266px;top:371px;width:72px;text-align:center;font:bold 12px 'Liberation Serif',serif;color:#2d3c6c">Order ID</div>
<div class="t" style="left:338px;top:371px;width:72px;text-align:center;font:bold 12px 'Liberation Serif',serif;color:#2d3c6c">Customer ID</div>
<div class="t" style="left:410px;top:371px;width:72px;text-align:center;font:bold 12px 'Liberation Serif',serif;color:#2d3c6c">Employee ID</div>
<div class="t" style="left:482px;top:371px;width:72px;text-align:center;font:bold 12px 'Liberation Serif',serif;color:#2d3c6c">Order Date</div>
<div class="t" style="left:266px;top:398px;width:72px;text-align:center;font:12px 'Liberation Serif',serif;color:#4f5f78;line-height:15px">ds1.G(<br>OrderID)</div>
<div class="t" style="left:338px;top:398px;width:72px;text-align:center;font:12px 'Liberation Serif',serif;color:#4f5f78;line-height:15px">ds1.G(<br>CustomerID)</div>
<div class="t" style="left:410px;top:398px;width:72px;text-align:center;font:12px 'Liberation Serif',serif;color:#4f5f78;line-height:15px">ds1.G(<br>EmployeeID)</div>
<div class="t" style="left:482px;top:398px;width:72px;text-align:center;font:12px 'Liberation Serif',serif;color:#4f5f78;line-height:15px">ds1.G(OrderDate<br>date)</div>
<div class="a" style="left:205px;top:734px;width:337px;height:15px;background:#a3a3a3"></div>
<div class="a" style="left:205px;top:734px;width:17px;height:15px;background:#b4b4b4"></div>
<svg class="a" style="left:210px;top:737px" width="8" height="10" viewBox="0 0 8 10"><path d="M6,1L2,5L6,9" fill="none" stroke="#555" stroke-width="1"/></svg>
<div class="a" style="left:205px;top:749px;width:337px;height:21px;background:#a9a9a9"></div>
<div class="a" style="left:205px;top:749px;width:75px;height:21px;background:#b3b3b3"></div>
<svg class="a" style="left:216px;top:754px" width="8" height="9" viewBox="0 0 8 9"><path d="M0,0H3.5V3.5H5V0H8V9H4.5V5H3V9H0Z" fill="#1d5a9a"/></svg>
<div class="t" style="left:227px;top:752px;font-size:12px;color:#444">sheet1</div>
<svg class="a" style="left:291px;top:752px" width="55" height="15" viewBox="0 0 55 15"><path d="M1.5,1.5H22L18,12.5H1.5Z" fill="none" stroke="#444" stroke-width="1"/><path d="M4,3H8.5V6H10V3H13V11H9.5V8H8V11H4Z" fill="#1d5a9a"/><circle cx="18" cy="10" r="4.5" fill="#13963a"/><path d="M18,7.5V12.5M15.5,10H20.5" stroke="#fff" stroke-width="1.3"/><path d="M31.5,1.5H52L48,12.5H31.5Z" fill="none" stroke="#444" stroke-width="1"/><path d="M34,4H38V6.5H34ZM40,4H44V6.5H40ZM34,8.5H44V11H34Z" fill="none" stroke="#444" stroke-width="0.9"/><circle cx="48" cy="10" r="4.5" fill="#13963a"/><path d="M48,7.5V12.5M45.5,10H50.5" stroke="#fff" stroke-width="1.3"/></svg>

<!-- side icon bar -->
<div class="a" style="left:1061px;top:55px;width:40px;height:233px;background:#e8e8ea"></div>
<svg class="a" style="left:1061px;top:55px" width="40" height="233" viewBox="0 0 40 233" fill="none" stroke="#8a8a8a" stroke-width="1.6">
 <path d="M18,7L23.5,12L18,17Z" fill="#9c9c9c" stroke="none"/>
 <path d="M13,36V51M13,36H28M13,45H28M13,45M18,45V51M23,45V51M23,36V45M23,40H28"/>
 <path d="M13,68V82H21M13,68H28V73M13,72.5H21M13,77H21M17.5,68V82" stroke-width="1.4"/><circle cx="24.5" cy="78" r="4.5" fill="#8a8a8a" stroke="none"/><path d="M24.5,76.5V80.5M24.5,74.8V75.6" stroke="#e8e8ea" stroke-width="1.3"/>
 <path d="M15,101H26M15,113H26M15,99V115M26,99V115" /><path d="M12.5,101H28.5M12.5,113H28.5M15,98.5V115.5M26,98.5V115.5" stroke-width="1.2"/>
 <path d="M13.8,167H12V174.5H13.8" stroke-width="1.4"/><rect x="15.9" y="165.9" width="12.9" height="3.7" stroke-width="1.6"/><rect x="15.9" y="172.9" width="10" height="3.7" stroke-width="1.6"/>
 <g transform="rotate(45 20.5 202)"><rect x="11" y="198.5" width="11" height="7" rx="3.5" stroke-width="1.7"/><rect x="19" y="198.5" width="11" height="7" rx="3.5" stroke-width="1.7"/></g>
</svg>
<div class="a" style="left:1065px;top:180px;width:32px;height:28px;background:#f4f4f6"></div>
<svg class="a" style="left:1073px;top:188px" width="16" height="12" viewBox="0 0 16 12"><rect width="16" height="12" fill="#3d8ff2"/><path d="M5,4H11L8,8Z" fill="#fff"/></svg>

<!-- right panel -->
<div class="a" style="left:1101px;top:55px;width:246px;height:715px;background:#f4f4f6"></div>
<div class="t" style="left:1111px;top:62px;font-size:13px">Widget Setting</div>
<svg class="a" style="left:1327px;top:61px" width="14" height="14" viewBox="0 0 14 14"><path d="M12.5,1.5L2.5,11.5" stroke="#3d8ff2" stroke-width="2"/><path d="M1.5,6V12.5H8Z" fill="#3d8ff2"/></svg>
<div class="a" style="left:1101px;top:81px;width:246px;height:1px;background:#dedee0"></div>
<svg class="a" style="left:1117px;top:86px" width="100" height="18" viewBox="0 0 100 18">
 <path d="M3.5,1L11,11.5M12.5,1L5,11.5" stroke="#333" stroke-width="1.3"/><circle cx="4" cy="14" r="2.5" fill="none" stroke="#3a92ec" stroke-width="1.6"/><circle cx="12" cy="14" r="2.5" fill="none" stroke="#3a92ec" stroke-width="1.6"/>
 <path d="M27.5,1.5H33.5L36.5,4.5V13.5H27.5Z" fill="#fff8e8" stroke="#333" stroke-width="1"/><path d="M32.5,5.5H39.5L42.5,8.5V17.5H32.5Z" fill="#fff8e8" stroke="#333" stroke-width="1"/>
 <rect x="53" y="2" width="10" height="11" fill="#f0a81c"/><rect x="56" y="1" width="4" height="2" fill="#c07010"/><path d="M58.5,5.5H65.5L68.5,8.5V17.5H58.5Z" fill="#fff8e8" stroke="#333" stroke-width="1"/>
 <path d="M81.5,3L92.5,15M92.5,3L81.5,15" stroke="#e53935" stroke-width="2"/>
</svg>
<div class="a" style="left:1111px;top:107px;width:226px;height:1px;background:#e2e2e4"></div>
<div class="a" style="left:1337px;top:108px;width:10px;height:172px;background:#fafafb"></div>
<div class="a" style="left:1338px;top:124px;width:8px;height:96px;border-radius:4px;background:#dddde0"></div>
<svg class="a" style="left:1120px;top:108px" width="80" height="172" viewBox="0 0 80 172">
<path d="M3.5,0V172M4,11.5H13M4,29.5H13M4,47.5H13M4,65.5H13M4,83.5H13M4,101.5H13M4,119.5H13M4,137.5H13M4,155.5H13" stroke="#e0e0e2" stroke-width="1"/>
<g transform="translate(16,0)">
 <circle cx="3.5" cy="7" r="2.8" fill="none" stroke="#333" stroke-width="1.1"/><circle cx="3.5" cy="7" r="1.3" fill="#333"/><path d="M8,7H14" stroke="#333" stroke-width="1.2"/><circle cx="3.5" cy="15.5" r="2.8" fill="none" stroke="#333" stroke-width="1.1"/><circle cx="3.5" cy="15.5" r="1.3" fill="#333"/><path d="M8,15.5H14" stroke="#333" stroke-width="1.2"/>
 <rect x="0.5" y="24.5" width="15" height="10" fill="#fff" stroke="#444" stroke-width="1"/><text x="2" y="32.7" font-size="9" fill="#555" font-family="Liberation Sans">lab</text>
 <rect x="0.5" y="42.5" width="15" height="10" fill="#fff" stroke="#4a6aa0" stroke-width="1"/>
 <rect x="0.5" y="60.5" width="15" height="10" fill="#fff" stroke="#444" stroke-width="1"/><text x="2" y="68.7" font-size="9" fill="#555" font-family="Liberation Sans">lab</text>
 <rect x="1" y="75" width="14" height="15" fill="#fff" stroke="#333" stroke-width="1.2"/><path d="M1,77.5H15" stroke="#333" stroke-width="1.5"/><g fill="#333"><rect x="3.0" y="80" width="2" height="2"/><rect x="3.0" y="83" width="2" height="2"/><rect x="3.0" y="86" width="2" height="2"/><rect x="6.5" y="80" width="2" height="2"/><rect x="6.5" y="83" width="2" height="2"/><rect x="6.5" y="86" width="2" height="2"/><rect x="10.0" y="80" width="2" height="2"/><rect x="10.0" y="83" width="2" height="2"/><rect x="10.0" y="86" width="2" height="2"/></g>
 <rect x="0.5" y="96.5" width="15" height="10" fill="#fff" stroke="#444" stroke-width="1"/><text x="2" y="104.7" font-size="9" fill="#555" font-family="Liberation Sans">lab</text>
 <rect x="1" y="111" width="14" height="15" fill="#fff" stroke="#333" stroke-width="1.2"/><path d="M1,113.5H15" stroke="#333" stroke-width="1.5"/><g fill="#333"><rect x="3.0" y="116" width="2" height="2"/><rect x="3.0" y="119" width="2" height="2"/><rect x="3.0" y="122" width="2" height="2"/><rect x="6.5" y="116" width="2" height="2"/><rect x="6.5" y="119" width="2" height="2"/><rect x="6.5" y="122" width="2" height="2"/><rect x="10.0" y="116" width="2" height="2"/><rect x="10.0" y="119" width="2" height="2"/><rect x="10.0" y="122" width="2" height="2"/></g>
 <rect x="0.5" y="132.5" width="15" height="10" fill="#fff" stroke="#444" stroke-width="1"/><text x="2" y="140.7" font-size="9" fill="#555" font-family="Liberation Sans">lab</text>
</g>
</svg>
<div class="a" style="left:1136px;top:254px;width:57px;height:18px;background:#3d8ff2"></div>
<svg class="a" style="left:1136px;top:258px" width="16" height="11" viewBox="0 0 16 11"><rect x="0.5" y="0.5" width="7" height="10" fill="#fff" stroke="#3a5a9a"/><rect x="7.5" y="0.5" width="8" height="10" fill="#b8d0ee" stroke="#3a5a9a"/><path d="M8.5,3.5H14.5L11.5,7.5Z" fill="#1c3a78"/></svg>
<div class="t" style="left:1156px;top:111px;font-size:12px;line-height:18px">paid_or_not<br>Labelpaid_or_not<br>name<br>Labelname<br>end<br>Labelend<br>start<br>Labelstart<br><span style="color:#fff">region</span></div>
<div class="a" style="left:1101px;top:280px;width:246px;height:12px;background:#f4f4f6"></div>
<div class="a" style="left:1136px;top:272px;width:120px;height:8px;overflow:hidden"><div class="a" style="left:0;top:4px;width:16px;height:11px;border:1px solid #444;background:#fff"></div><div class="t" style="left:20px;top:2px;font-size:12px;line-height:18px">Labelregion</div></div>
<!-- tabs -->
<div class="a" style="left:1101px;top:291px;width:82px;height:29px;background:#dcdce0"></div>
<div class="a" style="left:1265px;top:291px;width:82px;height:29px;background:#dcdce0"></div>
<div class="t" style="left:1115px;top:300px;font-size:12px">Properties</div>
<div class="t" style="left:1208px;top:300px;font-size:12.3px">Event</div>
<div class="t" style="left:1275px;top:292px;font-size:12px;line-height:15px">Mobile<br><span style="padding-left:2px">Terminal</span></div>
<div class="t" style="left:1112px;top:336px;font-size:12.3px">Add Event</div>
<div class="a" style="left:1181px;top:331px;width:156px;height:20px;background:#fff;border:1px solid #e2e2e4"></div>
<svg class="a" style="left:1248px;top:334px" width="20" height="14" viewBox="0 0 20 14"><path d="M7,0.5V13.5M0.5,7H13.5" stroke="#222" stroke-width="1.7"/><path d="M14.5,6H19.5L17,9Z" fill="#999"/></svg>
<div class="a" style="left:1112px;top:357px;width:225px;height:398px;background:#fff;border:1px solid #dcdcde"></div>
<svg class="a" style="left:1118px;top:361px" width="125" height="18" viewBox="0 0 125 18">
 <path d="M1.5,1.5H7L9,3.5V13H1.5Z" fill="#fff8e8" stroke="#333" stroke-width="1"/><path d="M6,6.5H12L15,9.5V17.5H6Z" fill="#fff8e8" stroke="#333" stroke-width="1"/>
 <path d="M35,3V16" stroke="#222" stroke-width="1.5"/><path d="M31,7.5L35,2L39,7.5Z" fill="#222"/>
 <path d="M60,2V14" stroke="#222" stroke-width="1.5"/><path d="M56,10L60,15.5L64,10Z" fill="#222"/>
 <circle cx="81" cy="3" r="1.4" fill="none" stroke="#333" stroke-width="1"/><circle cx="81" cy="8.5" r="1.4" fill="none" stroke="#333" stroke-width="1"/><circle cx="81" cy="14" r="1.4" fill="none" stroke="#333" stroke-width="1"/><path d="M88,1V13" stroke="#222" stroke-width="2.5"/><path d="M83.5,10L88,16.5L92.5,10Z" fill="#222"/>
 <path d="M107,3L118,15M118,3L107,15" stroke="#e53935" stroke-width="1.8"/>
</svg>
<div class="a" style="left:1113px;top:383px;width:223px;height:25px;background:#4096f0"></div>
<svg class="a" style="left:1117px;top:387px" width="16" height="17" viewBox="0 0 16 17"><path d="M1,14L3,9.5L11,1.5A1.5,1.5 0 0 1 14,4.5L6,12.5Z" fill="#fff"/><path d="M5,15.5H14" stroke="#fff" stroke-width="1"/></svg>
<div class="a" style="left:1133px;top:383px;width:86px;height:2px;background:#8e9cb0"></div><div class="a" style="left:1137px;top:385px;width:1px;height:21px;background:#dfe8f5"></div>
<div class="t" style="left:1147px;top:390px;font-size:12.3px;color:#fff;width:72px;overflow:hidden">After Editing1</div>
<div class="a" style="left:1101px;top:755px;width:246px;height:15px;background:#f4f4f6"></div>

<!-- dialog -->
<div class="a" style="left:542px;top:288px;width:570px;height:483px;background:#f3f3f5;border:1px solid #d6d6d8;border-bottom:none"></div>
<div class="a" style="left:543px;top:289px;width:568px;height:28px;background:#fafafb;border-bottom:1px solid #dcdcde"></div>
<div class="t" style="left:557px;top:296px;font:12.5px 'Liberation Serif',serif;color:#000;letter-spacing:0.85px">After Editing1</div>
<!-- combo -->
<div class="a" style="left:563px;top:340px;width:528px;height:20px;background:#fff;border:1px solid #d8d8da"></div>
<div class="a" style="left:1071px;top:340px;width:20px;height:20px;background:#d9d9dc"></div>
<svg class="a" style="left:1075px;top:346px" width="12" height="8" viewBox="0 0 12 8"><path d="M1.5,1.5L6,6L10.5,1.5" fill="none" stroke="#555" stroke-width="1.2"/></svg>
<div class="t" style="left:567px;top:345px;font-size:11.8px">JavaScript</div>
<!-- reference group -->
<div class="a" style="left:556px;top:373px;width:278px;height:1px;background:#dedee0"></div>
<div class="a" style="left:838px;top:373px;width:261px;height:1px;background:#dedee0"></div>
<div class="t" style="left:559px;top:369px;font-size:11.85px;background:#f3f3f5;padding:0 2px">Reference JavaScript</div>
<div class="t" style="left:842px;top:369px;font-size:11.85px;background:#f3f3f5;padding:0 2px">Parameter</div>
<svg class="a" style="left:738px;top:386px" width="360" height="15" viewBox="0 0 360 15">
 <path d="M7,1V14M0.5,7.5H13.5" stroke="#222" stroke-width="1.8"/>
 <path d="M26.5,1.5L38.5,13.5M38.5,1.5L26.5,13.5" stroke="#e53935" stroke-width="2"/>
 <path d="M57,4V14" stroke="#222" stroke-width="1.8"/><path d="M52.5,6.5L57,1L61.5,6.5Z" fill="#222"/>
 <path d="M81,1V11" stroke="#222" stroke-width="1.8"/><path d="M76.5,8.5L81,14L85.5,8.5Z" fill="#222"/>
 <path d="M272,1V14M265.5,7.5H278.5" stroke="#222" stroke-width="1.8"/>
 <path d="M290.5,1.5L302.5,13.5M302.5,1.5L290.5,13.5" stroke="#e53935" stroke-width="2"/>
 <path d="M322,4V14" stroke="#222" stroke-width="1.8"/><path d="M317.5,6.5L322,1L326.5,6.5Z" fill="#222"/>
 <path d="M346,1V11" stroke="#222" stroke-width="1.8"/><path d="M341.5,8.5L346,14L350.5,8.5Z" fill="#222"/>
</svg>
<!-- tables -->
<div class="a" style="left:558px;top:407px;width:273px;height:93px;border:1px solid #dedee0;background:#f4f4f6"></div>
<div class="a" style="left:559px;top:408px;width:271px;height:21px;background:#fff;border-bottom:2px solid #d8d8da"></div>
<div class="a" style="left:828px;top:411px;width:1px;height:14px;background:#bbb"></div>
<div class="t" style="left:559px;top:413px;width:270px;text-align:center;font-size:12px">Reference JavaScript</div>
<div class="a" style="left:841px;top:407px;width:255px;height:93px;border:1px solid #dedee0;background:#f4f4f6"></div>
<div class="a" style="left:842px;top:408px;width:253px;height:21px;background:#fff;border-bottom:2px solid #d8d8da"></div>
<div class="a" style="left:967px;top:411px;width:1px;height:14px;background:#bbb"></div>
<div class="a" style="left:1093px;top:411px;width:1px;height:14px;background:#bbb"></div>
<div class="t" style="left:842px;top:413px;width:125px;text-align:center;font-size:12px">Parameter</div>
<div class="t" style="left:968px;top:413px;width:125px;text-align:center;font-size:12px">Value</div>
<div class="a" style="left:1007px;top:420px;width:44px;height:21px;background:#fff;border:1px solid #111"></div>
<div class="t" style="left:1007px;top:425px;width:44px;text-align:center;font-size:12px">Insert</div>
<!-- JS group -->
<div class="a" style="left:556px;top:523px;width:543px;height:1px;background:#dedee0"></div>
<div class="t" style="left:559px;top:518px;font-size:11.85px;background:#f3f3f5;padding:0 2px">JavaScript</div>
<div class="a" style="left:558px;top:533px;width:400px;height:81px;border:1px solid #e0e0e2;border-bottom:none"></div>
<div class="t" style="left:559px;top:564px;font-size:13.5px">function(){</div>
<svg class="a" style="left:1005px;top:564px" width="18" height="18" viewBox="0 0 18 18"><path d="M10,7L16,1" stroke="#555" stroke-width="2.2"/><path d="M8.5,5.5L12.5,9.5Q11,15 4,17Q3,16 1,14Q2,7 8.5,5.5Z" fill="#f2a516"/></svg>
<div class="t" style="left:1026px;top:568px;font-size:12px">Format Code</div>
<div class="a" style="left:558px;top:613px;width:538px;height:135px;background:#fff;border:2px solid #d6d6da"></div>
<div class="a" style="left:560px;top:618px;width:534px;height:16px;background:#fffaaa"></div>
<div class="t" style="left:562px;top:617px;font:11.6px 'Liberation Mono',monospace;color:#111">_g<span style="color:#e02020">()</span>.parameterCommit<span style="color:#e02020">()</span>;</div>
<div class="t" style="left:558px;top:749px;font-size:13.5px">}</div>

<!-- annotation boxes -->
<div class="a" style="left:551px;top:603px;width:182px;height:44px;border:3px solid #f03a3c;box-shadow:2px 3px 5px rgba(0,0,0,0.35)"></div>
<div class="a" style="left:734px;top:635px;width:40px;height:40px;border-radius:50%;background:#f5444a;box-shadow:1px 4px 5px rgba(0,0,0,0.4)"></div>
<div class="t" style="left:734px;top:641px;width:40px;text-align:center;font-size:30px;color:#fff;-webkit-text-stroke:0.3px #fff">5</div>
<div class="a" style="left:1089px;top:412px;width:40px;height:40px;border-radius:50%;background:#f5444a;box-shadow:1px 4px 5px rgba(0,0,0,0.4)"></div>
<div class="t" style="left:1089px;top:418px;width:40px;text-align:center;font-size:30px;color:#fff;-webkit-text-stroke:0.3px #fff">4</div>
<div class="a" style="left:1188px;top:289px;width:68px;height:31px;border:3px solid #f03a3c;box-shadow:2px 3px 5px rgba(0,0,0,0.35)"></div>
<div class="a" style="left:1230px;top:331px;width:48px;height:21px;border:3px solid #f03a3c;box-shadow:2px 3px 5px rgba(0,0,0,0.35), inset 2px 3px 5px rgba(0,0,0,0.22)"></div>
<div class="a" style="left:1287px;top:342px;width:40px;height:40px;border-radius:50%;background:#f5444a;box-shadow:1px 4px 5px rgba(0,0,0,0.4)"></div>
<div class="t" style="left:1287px;top:348px;width:40px;text-align:center;font-size:30px;color:#fff;-webkit-text-stroke:0.3px #fff">3</div>
<div class="a" style="left:1130px;top:378px;width:92px;height:33px;border:3px solid #f03a3c;box-shadow:2px 3px 5px rgba(0,0,0,0.35)"></div>
<div class="a" style="left:1145px;top:251px;width:40px;height:40px;border-radius:50%;background:#f5444a;box-shadow:1px 4px 5px rgba(0,0,0,0.4)"></div>
<div class="t" style="left:1145px;top:257px;width:40px;text-align:center;font-size:30px;color:#fff;-webkit-text-stroke:0.3px #fff">2</div>

<!-- splitter arrows -->
<svg class="a" style="left:198px;top:62px" width="6" height="10" viewBox="0 0 6 10"><path d="M5,0V10L0,5Z" fill="#a8a8a8"/></svg>
<svg class="a" style="left:197px;top:413px" width="6" height="8" viewBox="0 0 6 8"><path d="M1.5,0V8M4.5,0V8" stroke="#aaa" stroke-width="1"/></svg>

</div>
</body></html>
